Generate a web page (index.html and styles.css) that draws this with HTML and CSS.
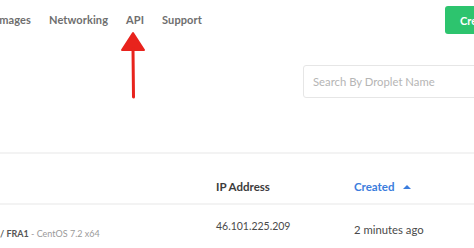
FILE: index.html
```html
<!DOCTYPE html>
<html lang="en">
<head>
  <meta charset="UTF-8">
  <title>Droplets</title>
  <link rel="stylesheet" href="styles.css">
</head>
<body>

<div class="page">
  <div class="topbar">
    <nav class="main-nav">
      <a href="#">Images</a>
      <a href="#">Networking</a>
      <a href="#">API</a>
      <a href="#">Support</a>
    </nav>
    <button class="create-btn">Create</button>
  </div>

  <!-- red hand drawn arrow pointing at API -->
  <svg class="arrow" width="30" height="70" viewBox="0 0 30 70">
    <path d="M13 2 L2 19 L24 19 Z" fill="#e8231d" stroke="#e8231d" stroke-width="2" stroke-linejoin="round"/>
    <path d="M13 18 L13.5 66" stroke="#e8231d" stroke-width="3" stroke-linecap="round"/>
  </svg>

  <div class="search-row">
    <input class="search" type="text" placeholder="Search By Droplet Name">
  </div>

  <div class="table">
    <div class="table-head">
      <div class="col-name"></div>
      <div class="col-ip">IP Address</div>
      <div class="col-created">Created <span class="caret"></span></div>
    </div>
    <div class="table-row">
      <div class="col-name"><span class="region">/ FRA1</span> <span class="image">- CentOS 7.2 x64</span></div>
      <div class="col-ip">46.101.225.209</div>
      <div class="col-created">2 minutes ago</div>
    </div>
  </div>
</div>

</body>
</html>
```

FILE: styles.css
```css
body {
    margin: 0;
    font-family: 'Lato', sans-serif;
    background: #fff;
    color: #444;
    overflow: hidden;
}
.page {
    position: relative;
    width: 474px;
    height: 248px;
    overflow: hidden;
}
.topbar {
    display: flex;
    justify-content: space-between;
    align-items: center;
    height: 40px;
}
.main-nav {
    display: flex;
    gap: 18px;
    margin-left: -4px;
    margin-top: -2px;
}
.main-nav a {
    text-decoration: none;
    color: #6e6e6e;
    font-size: 11px;
    font-weight: 700;
    letter-spacing: 0.1px;
}
.create-btn {
    width: 80px;
    height: 28px;
    margin-right: -51px;
    background: #2dc46e;
    color: #fff;
    border: none;
    border-radius: 3px;
    font-family: inherit;
    font-size: 11px;
    font-weight: 700;
    text-align: left;
    padding-left: 15px;
}
.arrow {
    position: absolute;
    left: 120px;
    top: 31px;
}
.search-row {
    display: flex;
    justify-content: flex-end;
    margin-top: 25px;
}
.search {
    width: 200px;
    height: 33px;
    margin-right: -29px;
    box-sizing: border-box;
    border: 1px solid #e6e6e6;
    border-radius: 3px;
    padding: 0 9px;
    font-family: inherit;
    font-size: 11.3px;
}
.search::placeholder {
    color: #b5b5b5;
}
.table {
    margin-top: 54px;
    border-top: 2px solid #f3f3f3;
}
.table-head,
.table-row {
    display: grid;
    grid-template-columns: 216px 138px 1fr;
}
.table-head {
    height: 51px;
    align-items: end;
    padding-bottom: 10px;
    box-sizing: border-box;
    border-bottom: 2px solid #f3f3f3;
    font-size: 11.5px;
    font-weight: 700;
    color: #3c3c3c;
}
.col-created {
    display: flex;
    align-items: center;
}
.table-head .col-created {
    color: #3b7ddd;
}
.caret {
    margin-left: 8px;
    border-left: 4px solid transparent;
    border-right: 4px solid transparent;
    border-bottom: 4px solid #3b7ddd;
}
.table-row {
    padding-top: 15px;
    font-size: 11.3px;
    color: #4a4a4a;
}
.table-row .col-ip {
    font-size: 10.5px;
}
.table-row .col-name {
    padding-top: 8px;
    font-size: 9px;
}
.region {
    color: #555;
    font-weight: 700;
}
.image {
    color: #9a9a9a;
}
```
